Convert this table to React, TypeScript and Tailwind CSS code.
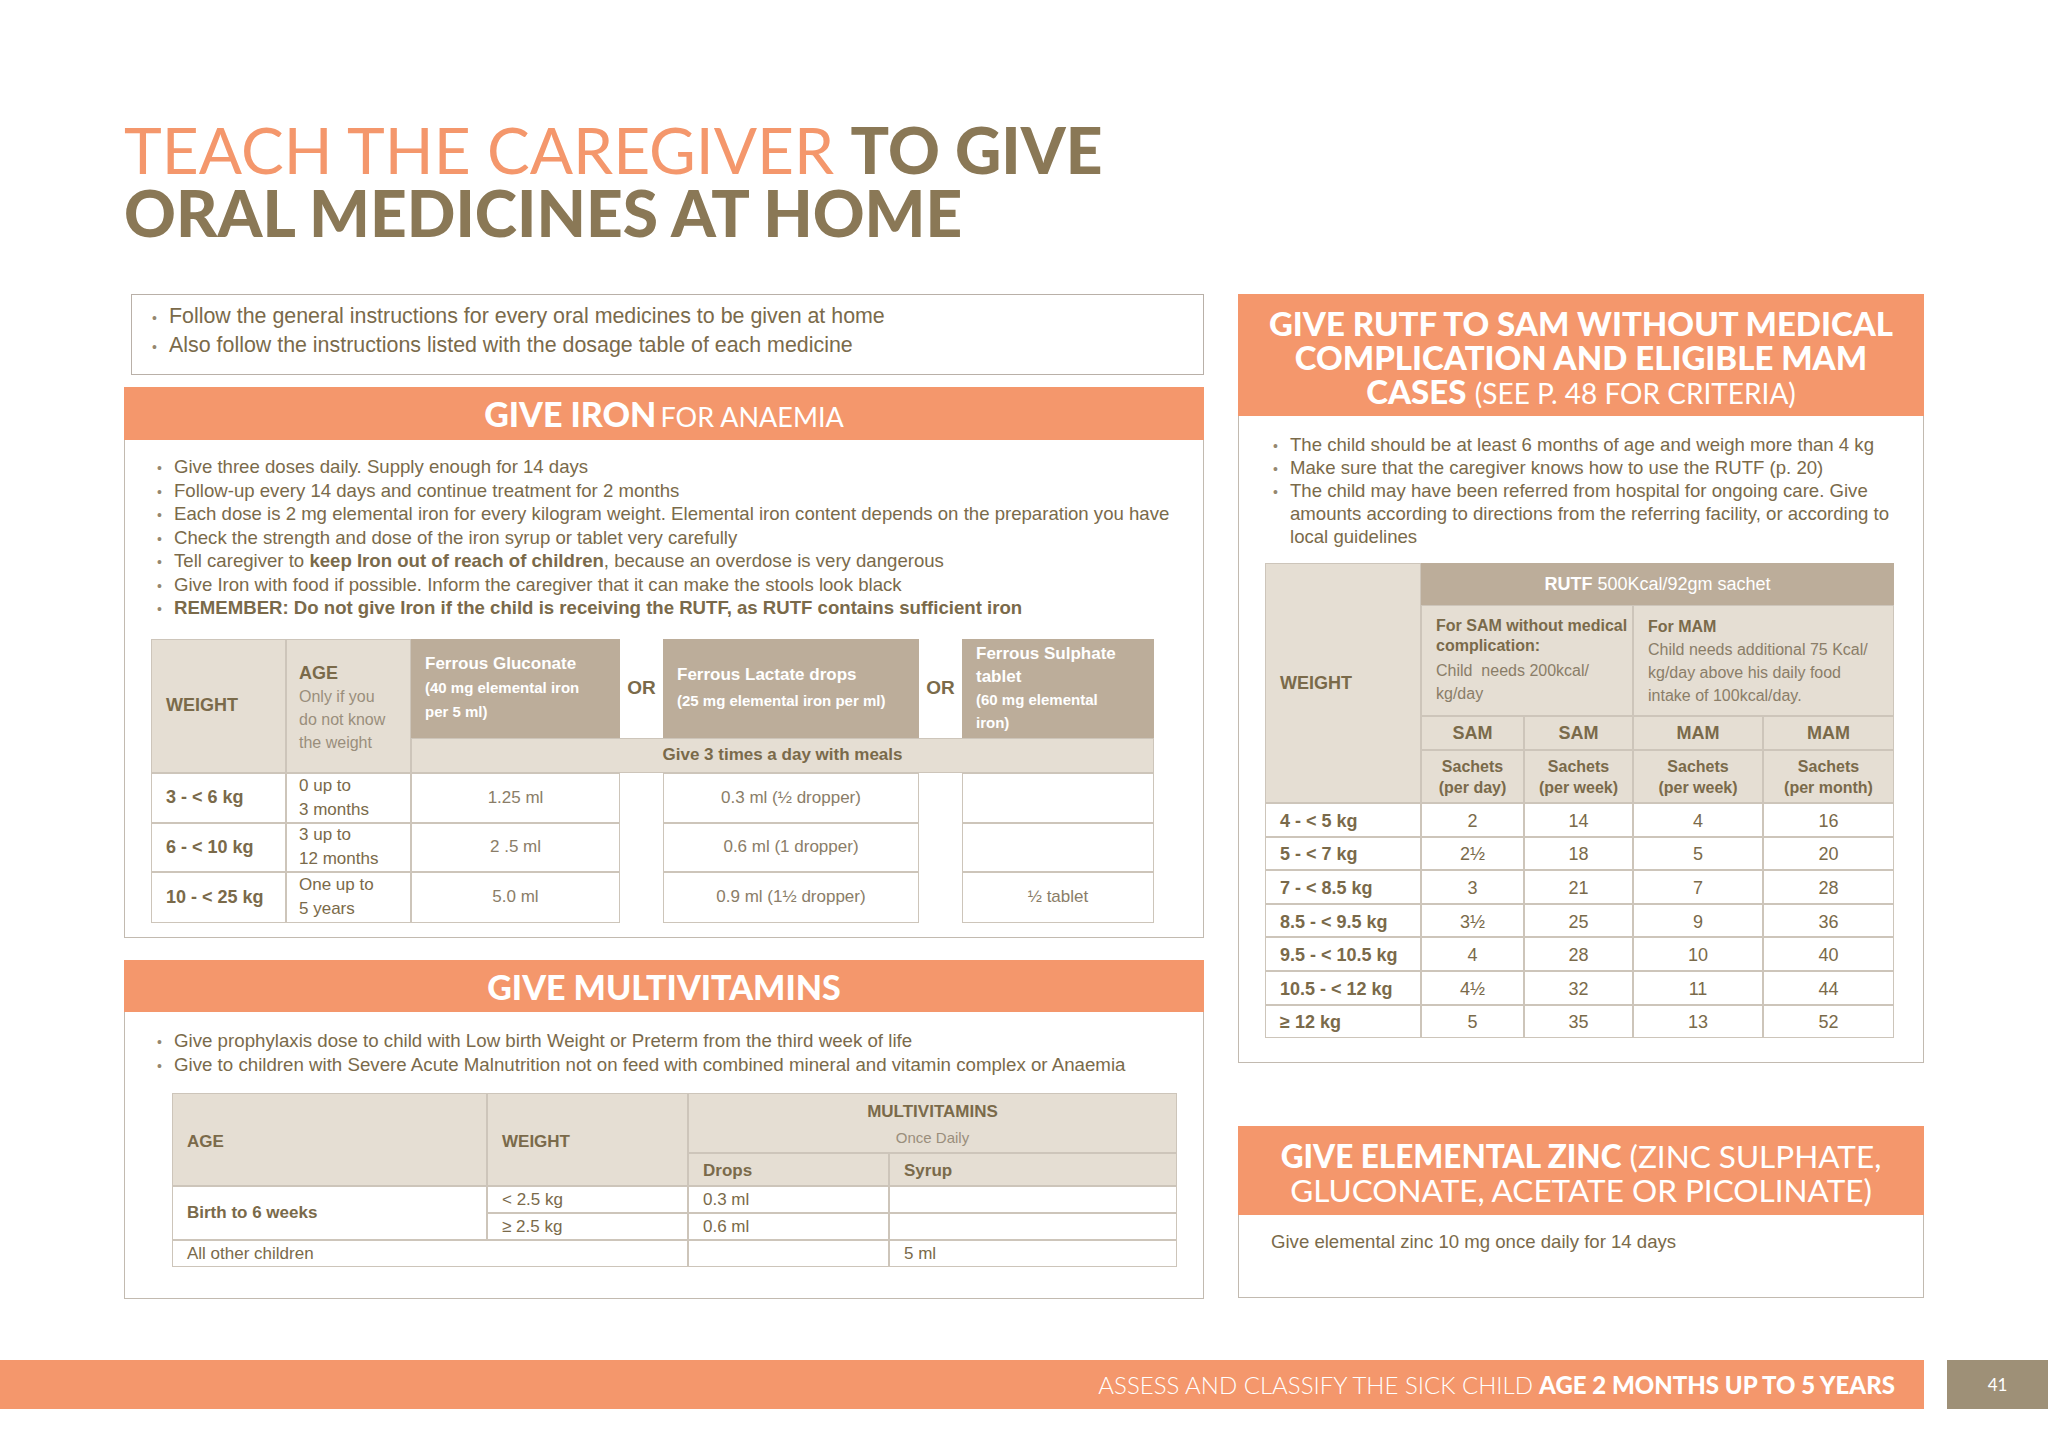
const orange = "bg-[#f4976c]";
const line = "border border-[#cdc5ba]";
const light = "bg-[#e5ded3]";
const dark = "bg-[#bcad9a] text-white";

function Bullets({ items, className }: { items: React.ReactNode[]; className?: string }) {
  return (
    <ul className={className}>
      {items.map((item, i) => (
        <li key={i} className="flex items-baseline">
          <span className="w-[17px] shrink-0 text-[14px] leading-none text-[#95876f]">•</span>
          <span>{item}</span>
        </li>
      ))}
    </ul>
  );
}

function Band({ children, className }: { children: React.ReactNode; className?: string }) {
  return (
    <div
      className={`${orange} flex flex-col items-center justify-center text-center text-white font-['Lato',sans-serif] uppercase ${className ?? ""}`}
    >
      {children}
    </div>
  );
}

function IronTable() {
  const val = `${line} flex items-center justify-center text-[17px] text-[#8a7d68]`;
  const wt = `${line} col-start-1 flex items-center pl-[14px] text-[18px] font-bold`;
  const age = `${line} col-start-2 flex flex-col justify-center pl-[12px] text-[17px] leading-[24px]`;
  return (
    <div className="ml-[26px] mt-[19px] grid w-[1003px] grid-cols-[135px_125px_209px_43px_256px_43px_192px] grid-rows-[99px_35px_50px_49px_51px]">
      <div className={`${line} ${light} col-start-1 row-start-1 row-span-2 flex items-center pl-[14px] text-[18px] font-bold`}>
        WEIGHT
      </div>
      <div className={`${line} ${light} col-start-2 row-start-1 row-span-2 flex flex-col justify-center pl-[12px] pt-[4px] text-[16px] leading-[23px] text-[#9a8e7c]`}>
        <span className="text-[18px] font-bold text-[#7a6a4a]">AGE</span>
        <span>Only if you</span>
        <span>do not know</span>
        <span>the weight</span>
      </div>
      <div className={`${dark} col-start-3 row-start-1 flex flex-col justify-center pl-[14px] leading-[24px]`}>
        <span className="text-[17px] font-bold">Ferrous Gluconate</span>
        <span className="text-[15px] font-bold">(40 mg elemental iron</span>
        <span className="text-[15px] font-bold">per 5 ml)</span>
      </div>
      <div className="col-start-4 row-start-1 flex items-center justify-center text-[19px] font-bold">OR</div>
      <div className={`${dark} col-start-5 row-start-1 flex flex-col justify-center pl-[14px] leading-[26px]`}>
        <span className="text-[17px] font-bold">Ferrous Lactate drops</span>
        <span className="text-[15px] font-bold">(25 mg elemental iron per ml)</span>
      </div>
      <div className="col-start-6 row-start-1 flex items-center justify-center text-[19px] font-bold">OR</div>
      <div className={`${dark} col-start-7 row-start-1 flex flex-col justify-center pl-[14px] leading-[23px]`}>
        <span className="text-[17px] font-bold">Ferrous Sulphate</span>
        <span className="text-[17px] font-bold">tablet</span>
        <span className="text-[15px] font-bold">(60 mg elemental</span>
        <span className="text-[15px] font-bold">iron)</span>
      </div>
      <div className={`${line} ${light} col-start-3 col-span-5 row-start-2 flex items-center justify-center text-[17px] font-bold`}>
        Give 3 times a day with meals
      </div>

      <div className={`${wt} row-start-3`}>3 - &lt; 6 kg</div>
      <div className={`${age} row-start-3`}>
        <span>0 up to</span>
        <span>3 months</span>
      </div>
      <div className={`${val} col-start-3 row-start-3`}>1.25 ml</div>
      <div className={`${val} col-start-5 row-start-3`}>0.3 ml (½ dropper)</div>
      <div className={`${val} col-start-7 row-start-3`}></div>

      <div className={`${wt} row-start-4`}>6 - &lt; 10 kg</div>
      <div className={`${age} row-start-4`}>
        <span>3 up to</span>
        <span>12 months</span>
      </div>
      <div className={`${val} col-start-3 row-start-4`}>2 .5 ml</div>
      <div className={`${val} col-start-5 row-start-4`}>0.6 ml (1 dropper)</div>
      <div className={`${val} col-start-7 row-start-4`}></div>

      <div className={`${wt} row-start-5`}>10 - &lt; 25 kg</div>
      <div className={`${age} row-start-5`}>
        <span>One up to</span>
        <span>5 years</span>
      </div>
      <div className={`${val} col-start-3 row-start-5`}>5.0 ml</div>
      <div className={`${val} col-start-5 row-start-5`}>0.9 ml (1½ dropper)</div>
      <div className={`${val} col-start-7 row-start-5`}>½ tablet</div>
    </div>
  );
}

function MultiTable() {
  const cell = `${line} flex items-center pl-[14px] text-[17px]`;
  return (
    <div className="ml-[47px] mt-[17px] grid w-[1005px] grid-cols-[315px_201px_201px_288px] grid-rows-[60px_33px_27px_27px_27px]">
      <div className={`${cell} ${light} col-start-1 row-start-1 row-span-2 pt-[4px] font-bold`}>AGE</div>
      <div className={`${cell} ${light} col-start-2 row-start-1 row-span-2 pt-[4px] font-bold`}>WEIGHT</div>
      <div className={`${line} ${light} col-start-3 col-span-2 row-start-1 flex flex-col items-center justify-center pt-[4px] leading-[26px]`}>
        <span className="text-[17px] font-bold">MULTIVITAMINS</span>
        <span className="text-[15px] text-[#9a8e7c]">Once Daily</span>
      </div>
      <div className={`${cell} ${light} col-start-3 row-start-2 pt-[3px] font-bold`}>Drops</div>
      <div className={`${cell} ${light} col-start-4 row-start-2 pt-[3px] font-bold`}>Syrup</div>

      <div className={`${cell} col-start-1 row-start-3 row-span-2 font-bold`}>Birth to 6 weeks</div>
      <div className={`${cell} col-start-2 row-start-3`}>&lt; 2.5 kg</div>
      <div className={`${cell} col-start-3 row-start-3`}>0.3 ml</div>
      <div className={`${cell} col-start-4 row-start-3`}></div>
      <div className={`${cell} col-start-2 row-start-4`}>≥ 2.5 kg</div>
      <div className={`${cell} col-start-3 row-start-4`}>0.6 ml</div>
      <div className={`${cell} col-start-4 row-start-4`}></div>

      <div className={`${cell} col-start-1 col-span-2 row-start-5`}>All other children</div>
      <div className={`${cell} col-start-3 row-start-5`}></div>
      <div className={`${cell} col-start-4 row-start-5`}>5 ml</div>
    </div>
  );
}

const rutfRows = [
  ["4 - < 5 kg", "2", "14", "4", "16"],
  ["5 - < 7 kg", "2½", "18", "5", "20"],
  ["7 - < 8.5 kg", "3", "21", "7", "28"],
  ["8.5 - < 9.5 kg", "3½", "25", "9", "36"],
  ["9.5 - < 10.5 kg", "4", "28", "10", "40"],
  ["10.5 - < 12 kg", "4½", "32", "11", "44"],
  ["≥ 12 kg", "5", "35", "13", "52"],
];

function RutfTable() {
  const head = `${line} ${light} flex flex-col items-center justify-center font-bold`;
  return (
    <div className="ml-[26px] mt-[15px] grid w-[629px] grid-cols-[156px_103px_109px_130px_131px] grid-rows-[42px_111px_34px_53px_repeat(7,33.6px)]">
      <div className={`${line} ${light} col-start-1 row-start-1 row-span-4 flex items-center pl-[14px] text-[18px] font-bold`}>
        WEIGHT
      </div>
      <div className={`${dark} col-start-2 col-span-4 row-start-1 flex items-center justify-center text-[18px]`}>
        <span className="font-bold">RUTF</span>&nbsp;500Kcal/92gm sachet
      </div>
      <div className={`${line} ${light} col-start-2 col-span-2 row-start-2 flex flex-col justify-center pl-[14px] text-[16px] leading-[23px]`}>
        <span className="font-bold leading-[20px]">For SAM without medical</span>
        <span className="font-bold leading-[20px]">complication:</span>
        <span className="mt-[3px] text-[#8a7d68]">Child&nbsp; needs 200kcal/</span>
        <span className="text-[#8a7d68]">kg/day</span>
      </div>
      <div className={`${line} ${light} col-start-4 col-span-2 row-start-2 flex flex-col justify-center pl-[14px] text-[16px] leading-[23px]`}>
        <span className="font-bold">For MAM</span>
        <span className="text-[#8a7d68]">Child needs additional 75 Kcal/</span>
        <span className="text-[#8a7d68]">kg/day above his daily food</span>
        <span className="text-[#8a7d68]">intake of 100kcal/day.</span>
      </div>
      {["SAM", "SAM", "MAM", "MAM"].map((t, i) => (
        <div key={i} className={`${head} row-start-3 text-[18px]`}>
          {t}
        </div>
      ))}
      {["(per day)", "(per week)", "(per week)", "(per month)"].map((t, i) => (
        <div key={i} className={`${head} row-start-4 text-[16px] leading-[21px]`}>
          <span>Sachets</span>
          <span>{t}</span>
        </div>
      ))}
      {rutfRows.map((r) =>
        r.map((v, j) =>
          j === 0 ? (
            <div key={r[0] + j} className={`${line} flex items-center pl-[14px] pt-[3px] text-[18px] font-bold`}>
              {v}
            </div>
          ) : (
            <div key={r[0] + j} className={`${line} flex items-center justify-center pt-[3px] text-[18px]`}>
              {v}
            </div>
          ),
        ),
      )}
    </div>
  );
}

export default function App() {
  return (
    <div className="flex h-[1448px] w-[2048px] flex-col bg-white font-['Liberation_Sans',Arial,sans-serif] text-[#7a6a4a]">
      <div className="h-[294px] pl-[124px] pt-[118px]">
        <h1 className="font-['Lato',sans-serif] text-[64px] leading-[63px] text-[#8a7856]">
          <span className="font-normal text-[#f4976c]">TEACH THE CAREGIVER</span> <span className="font-black">TO GIVE</span>
          <br />
          <span className="font-black">ORAL MEDICINES AT HOME</span>
        </h1>
      </div>

      <div className="flex items-start gap-[34px] pl-[124px]">
        <div className="flex w-[1080px] flex-col">
          <div className="ml-[7px] flex h-[81px] flex-col justify-center border border-[#b9b0a8] pb-[8px] pl-[20px] text-[21.4px] leading-[29px]">
            <Bullets
              items={[
                "Follow the general instructions for every oral medicines to be given at home",
                "Also follow the instructions listed with the dosage table of each medicine",
              ]}
            />
          </div>

          <section className="mt-[12px]">
            <Band className="h-[53px]">
              <div>
                <span className="text-[34px] font-black">GIVE IRON</span>{" "}
                <span className="text-[27px]">FOR ANAEMIA</span>
              </div>
            </Band>
            <div className="h-[498px] border-x border-b border-[#c2bab0] pt-[15px]">
              <Bullets
                className="pl-[32px] text-[18.6px] leading-[23.5px]"
                items={[
                  "Give three doses daily. Supply enough for 14 days",
                  "Follow-up every 14 days and continue treatment for 2 months",
                  "Each dose is 2 mg elemental iron for every kilogram weight. Elemental iron content depends on the preparation you have",
                  "Check the strength and dose of the iron syrup or tablet very carefully",
                  <>
                    Tell caregiver to <b>keep Iron out of reach of children</b>, because an overdose is very dangerous
                  </>,
                  "Give Iron with food if possible. Inform the caregiver that it can make the stools look black",
                  <b>REMEMBER: Do not give Iron if the child is receiving the RUTF, as RUTF contains sufficient iron</b>,
                ]}
              />
              <IronTable />
            </div>
          </section>

          <section className="mt-[22px]">
            <Band className="h-[52px]">
              <span className="text-[34px] font-black">GIVE MULTIVITAMINS</span>
            </Band>
            <div className="h-[287px] border-x border-b border-[#c2bab0] pt-[17px]">
              <Bullets
                className="pl-[32px] text-[18.7px] leading-[23.5px]"
                items={[
                  "Give prophylaxis dose to child with Low birth Weight or Preterm from the third week of life",
                  "Give to children with Severe Acute Malnutrition not on feed with combined mineral and vitamin complex or Anaemia",
                ]}
              />
              <MultiTable />
            </div>
          </section>
        </div>

        <div className="flex w-[686px] flex-col">
          <section>
            <Band className="h-[122px] pt-[5px] text-[33px] leading-[34px]">
              <span className="font-black">GIVE RUTF TO SAM WITHOUT MEDICAL</span>
              <span className="font-black">COMPLICATION AND ELIGIBLE MAM</span>
              <span>
                <span className="font-black">CASES</span> <span className="text-[28px]">(SEE P. 48 FOR CRITERIA)</span>
              </span>
            </Band>
            <div className="h-[647px] border-x border-b border-[#c2bab0] pt-[17px]">
              <Bullets
                className="pl-[34px] pr-[10px] text-[18.6px] leading-[23px]"
                items={[
                  "The child should be at least 6 months of age and weigh more than 4 kg",
                  "Make sure that the caregiver knows how to use the RUTF (p. 20)",
                  <span className="whitespace-nowrap">
                    The child may have been referred from hospital for ongoing care. Give
                    <br />
                    amounts according to directions from the referring facility, or according to
                    <br />
                    local guidelines
                  </span>,
                ]}
              />
              <RutfTable />
            </div>
          </section>

          <section className="mt-[63px]">
            <Band className="h-[89px] pt-[4px] text-[31.5px] leading-[34px]">
              <span>
                <span className="font-black">GIVE ELEMENTAL ZINC</span> (ZINC SULPHATE,
              </span>
              <span>GLUCONATE, ACETATE OR PICOLINATE)</span>
            </Band>
            <div className="h-[83px] border-x border-b border-[#c2bab0] pl-[32px] pt-[15px] text-[18.6px] leading-[24px]">
              Give elemental zinc 10 mg once daily for 14 days
            </div>
          </section>
        </div>
      </div>

      <footer className="mb-[39px] mt-auto flex h-[49px] gap-[23px]">
        <div className={`${orange} flex w-[1924px] items-center justify-end pr-[29px] font-['Lato',sans-serif] text-[24px] text-white`}>
          <span className="font-light">ASSESS AND CLASSIFY THE SICK CHILD</span>&nbsp;
          <span className="font-black">AGE 2 MONTHS UP TO 5 YEARS</span>
        </div>
        <div className="flex flex-1 items-center justify-center bg-[#9e9077] font-['Lato',sans-serif] text-[17px] text-white">41</div>
      </footer>
    </div>
  );
}
